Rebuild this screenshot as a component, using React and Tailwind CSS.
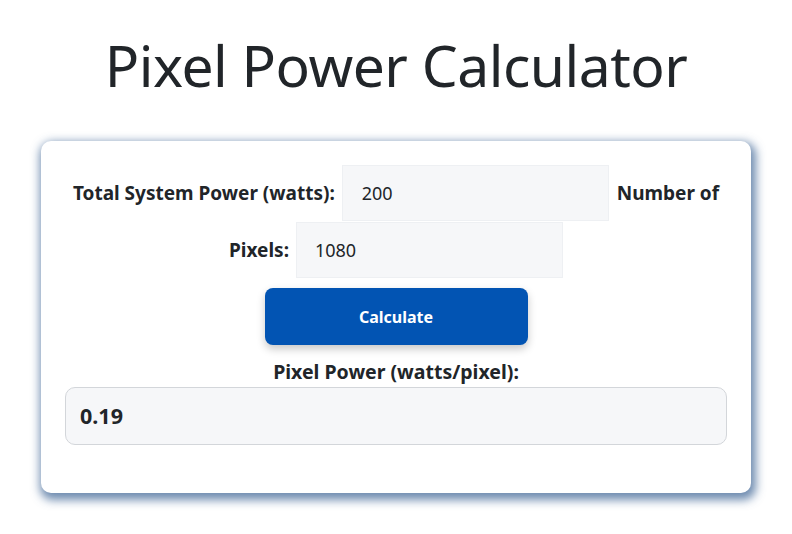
import { useState } from 'react';

const FONT = { fontFamily: '"Noto Sans", "Open Sans", sans-serif' };

const App = () => {
  const [power, setPower] = useState('200');
  const [pixels, setPixels] = useState('1080');
  const [result, setResult] = useState('0.19');

  const calculate = () => {
    const p = parseFloat(power);
    const n = parseFloat(pixels);
    if (!n) return;
    setResult((p / n).toFixed(2));
  };

  return (
    <div className="min-h-[534px] bg-white text-[#212529]" style={FONT}>
      <h1 className="pt-[25px] text-center text-[57px] font-normal leading-[80px] tracking-[-0.5px]">
        Pixel Power Calculator
      </h1>

      <div className="mx-auto mt-[36px] w-[710px] rounded-[10px] bg-white px-[24px] pt-[24px] pb-[48px] shadow-[2px_4px_10px_3px_rgba(55,95,145,0.72)]">
        <div className="flex items-center justify-center text-[19px] font-bold">
          <label className="mr-[7px]">Total System Power (watts):</label>
          <input
            value={power}
            onChange={(e) => setPower(e.target.value)}
            className="h-[56px] w-[267px] border border-[#eef0f3] bg-[#f6f7f9] px-[19px] text-[18px] font-normal outline-none"
          />
          <span className="ml-[8px]">Number of</span>
        </div>
        <div className="mt-[1px] flex items-center justify-center text-[19px] font-bold">
          <label className="mr-[7px]">Pixels:</label>
          <input
            value={pixels}
            onChange={(e) => setPixels(e.target.value)}
            className="h-[56px] w-[267px] border border-[#eef0f3] bg-[#f6f7f9] px-[18px] text-[18px] font-normal outline-none"
          />
        </div>

        <div className="mt-[10px] flex justify-center">
          <button
            onClick={calculate}
            className="h-[57px] w-[263px] rounded-[8px] bg-[#0254b3] text-[16px] font-bold text-white shadow-[0_4px_8px_rgba(0,0,0,0.22)]"
          >
            Calculate
          </button>
        </div>

        <p className="mt-[13px] text-center text-[19.5px] font-bold leading-[28px]">Pixel Power (watts/pixel):</p>
        <div className="mt-[1px] flex h-[58px] items-center rounded-[10px] border border-[#d3d6da] bg-[#f6f7f9] px-[14px] text-[21.5px] font-bold">
          {result}
        </div>
      </div>
    </div>
  );
};

export default App;
